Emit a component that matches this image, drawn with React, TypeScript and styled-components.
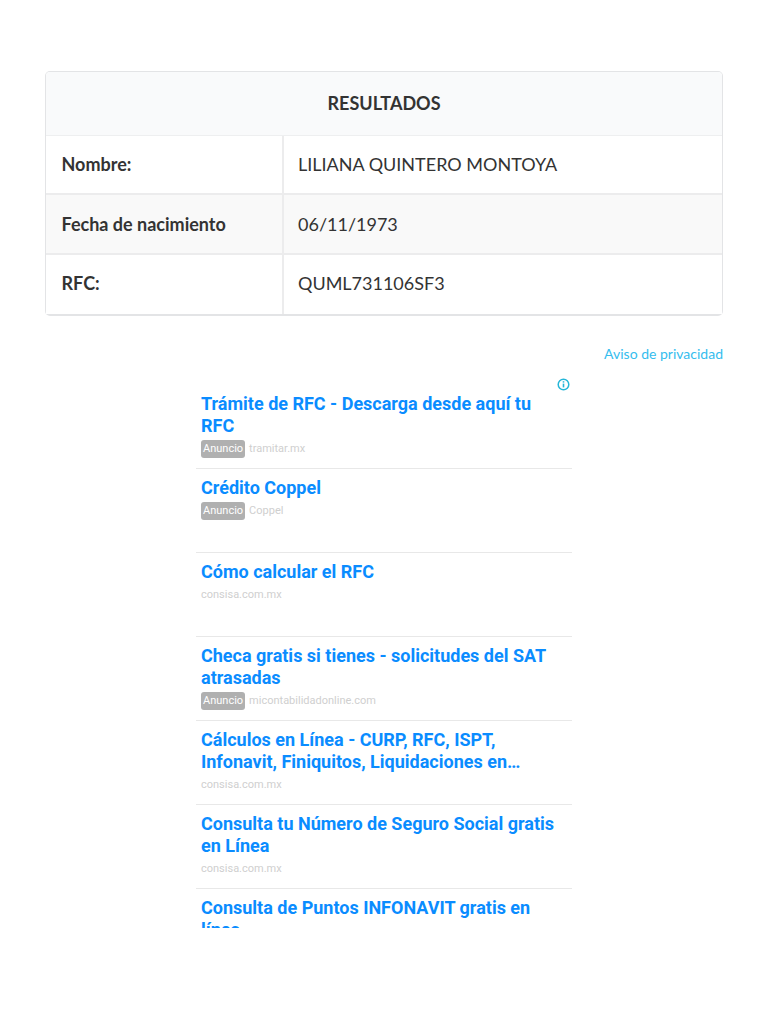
import styled, { createGlobalStyle } from "styled-components";

const GlobalStyle = createGlobalStyle`
  html, body {
    margin: 0;
    padding: 0;
    background: #fff;
    font-family: Lato, "Liberation Sans", sans-serif;
  }
`;

const Page = styled.div`
  box-sizing: border-box;
  width: 768px;
  height: 1024px;
  padding: 71px 45px 0;
  overflow: hidden;
`;

const ResultsTable = styled.table`
  width: 100%;
  border-collapse: separate;
  border-spacing: 0;
  border: 1px solid #e3e4e6;
  border-bottom-width: 2px;
  border-radius: 5px;
  color: #333;
  font-size: 18px;
  table-layout: fixed;
`;

const LabelColumn = styled.col`
  width: 238px;
`;

const HeaderCell = styled.th`
  height: 62px;
  padding: 0 0 1px;
  background: #f9fafb;
  border-bottom: 1px solid #eeeff0;
  border-radius: 4px 4px 0 0;
  font-weight: 700;
  text-align: center;
`;

const Row = styled.tr<{ $striped?: boolean }>`
  background: ${(p) => (p.$striped ? "#f9f9f9" : "#fff")};
`;

const LabelCell = styled.td<{ $height: number; $lift?: number; $last?: boolean }>`
  height: ${(p) => p.$height}px;
  padding: 0 0 ${(p) => p.$lift ?? 0}px 15.5px;
  box-sizing: border-box;
  font-weight: 700;
  border-right: 2px solid #ececed;
  border-bottom: ${(p) => (p.$last ? "0" : "2px solid #ececed")};
`;

const ValueCell = styled.td<{ $lift?: number; $last?: boolean }>`
  padding: 0 0 ${(p) => p.$lift ?? 0}px 14px;
  box-sizing: border-box;
  border-bottom: ${(p) => (p.$last ? "0" : "2px solid #ececed")};
`;

const PrivacyRow = styled.div`
  display: flex;
  justify-content: flex-end;
  margin-top: 28px;
  font-size: 14px;
  line-height: 20px;
`;

const PrivacyLink = styled.a`
  color: #35bdee;
  text-decoration: none;
`;

const AdFrame = styled.div`
  position: relative;
  box-sizing: border-box;
  width: 376px;
  height: 551px;
  margin: 13px 0 0 151px;
  padding-top: 8px;
  overflow: hidden;
  font-family: Roboto, "Liberation Sans", sans-serif;
`;

const AdInfo = styled.svg`
  position: absolute;
  top: 1px;
  right: 2px;
  width: 13px;
  height: 13px;
  color: #25b6d8;
`;

const AdItem = styled.div`
  box-sizing: border-box;
  height: 84px;
  padding: 8px 4px 0 5px;
  border-bottom: 1px solid #e8e8e8;
`;

const AdTitle = styled.a`
  display: block;
  color: #0a8cff;
  font-size: 18px;
  font-weight: 700;
  line-height: 22px;
  text-decoration: none;
`;

const AdMeta = styled.div`
  display: flex;
  align-items: center;
  gap: 4px;
  margin-top: 2px;
  height: 19px;
  color: #cfcfcf;
  font-size: 11px;
`;

const AdBadge = styled.span`
  padding: 1px 2px;
  border-radius: 3px;
  background: #b0b0b0;
  color: #fff;
  font-size: 11px;
  line-height: 16px;
`;

const ads = [
  { title: "Trámite de RFC - Descarga desde aquí tu RFC", source: "tramitar.mx", badge: true },
  { title: "Crédito Coppel", source: "Coppel", badge: true },
  { title: "Cómo calcular el RFC", source: "consisa.com.mx", badge: false },
  { title: "Checa gratis si tienes - solicitudes del SAT atrasadas", source: "micontabilidadonline.com", badge: true },
  { title: "Cálculos en Línea - CURP, RFC, ISPT, Infonavit, Finiquitos, Liquidaciones en…", source: "consisa.com.mx", badge: false },
  { title: "Consulta tu Número de Seguro Social gratis en Línea", source: "consisa.com.mx", badge: false },
  { title: "Consulta de Puntos INFONAVIT gratis en línea", source: "consisa.com.mx", badge: false },
];

export default function App() {
  return (
    <Page>
      <GlobalStyle />
      <ResultsTable>
        <colgroup>
          <LabelColumn />
          <col />
        </colgroup>
        <thead>
          <tr>
            <HeaderCell colSpan={2}>RESULTADOS</HeaderCell>
          </tr>
        </thead>
        <tbody>
          <Row>
            <LabelCell $height={59} $lift={2}>Nombre:</LabelCell>
            <ValueCell $lift={2}>LILIANA QUINTERO MONTOYA</ValueCell>
          </Row>
          <Row $striped>
            <LabelCell $height={60}>Fecha de nacimiento</LabelCell>
            <ValueCell>06/11/1973</ValueCell>
          </Row>
          <Row>
            <LabelCell $height={59} $lift={3} $last>RFC:</LabelCell>
            <ValueCell $lift={3} $last>QUML731106SF3</ValueCell>
          </Row>
        </tbody>
      </ResultsTable>
      <PrivacyRow>
        <PrivacyLink href="#">Aviso de privacidad</PrivacyLink>
      </PrivacyRow>
      <AdFrame>
        <AdInfo viewBox="0 0 13 13" fill="none" stroke="currentColor">
          <circle cx="6.5" cy="6.5" r="5.3" strokeWidth="1.5" />
          <path d="M6.5 5.6v3.8" strokeWidth="1.6" />
          <path d="M6.5 3.2v1.4" strokeWidth="1.6" />
        </AdInfo>
        {ads.map((ad) => (
          <AdItem key={ad.title}>
            <AdTitle href="#">{ad.title}</AdTitle>
            <AdMeta>
              {ad.badge && <AdBadge>Anuncio</AdBadge>}
              <span>{ad.source}</span>
            </AdMeta>
          </AdItem>
        ))}
      </AdFrame>
    </Page>
  );
}
